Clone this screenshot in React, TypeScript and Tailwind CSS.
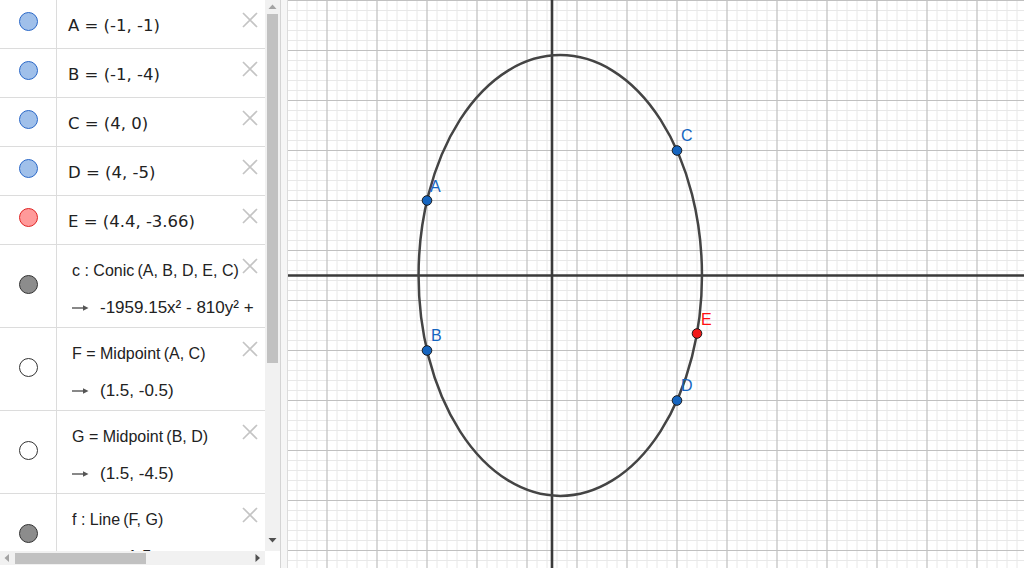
import React from 'react';

type Dot = 'blue' | 'red' | 'gray' | 'white';

const dotClass: Record<Dot, string> = {
  blue: 'bg-[#a0c0ea] border-[#2a68c8]',
  red: 'bg-[#ff9a9a] border-[#e02424]',
  gray: 'bg-[#8c8c8c] border-[#333333]',
  white: 'bg-white border-[#333333]',
};

const simpleRows: { dot: Dot; text: string }[] = [
  { dot: 'blue', text: 'A = (-1, -1)' },
  { dot: 'blue', text: 'B = (-1, -4)' },
  { dot: 'blue', text: 'C = (4, 0)' },
  { dot: 'blue', text: 'D = (4, -5)' },
  { dot: 'red', text: 'E = (4.4, -3.66)' },
];

const tallRows: { dot: Dot; def: string; value: React.ReactNode }[] = [
  { dot: 'gray', def: 'c : Conic\u2009(A, B, D, E, C)', value: <>-1959.15x² - 810y² +</> },
  { dot: 'white', def: 'F = Midpoint\u2009(A, C)', value: '(1.5, -0.5)' },
  { dot: 'white', def: 'G = Midpoint\u2009(B, D)', value: '(1.5, -4.5)' },
  { dot: 'gray', def: 'f : Line\u2009(F, G)', value: 'x = 1.5' },
];

function CloseX() {
  return (
    <svg width="16" height="16" viewBox="0 0 16 16" className="shrink-0">
      <path d="M1 1 L15 15 M15 1 L1 15" stroke="#c4c4c4" strokeWidth="1.7" fill="none" />
    </svg>
  );
}

function Arrow() {
  return (
    <svg width="17" height="8" viewBox="0 0 17 8" className="shrink-0">
      <path d="M0 4 L13 4" stroke="#555555" strokeWidth="1.4" />
      <path d="M11 1.2 L16.5 4 L11 6.8 Z" fill="#555555" />
    </svg>
  );
}

function Circle({ dot }: { dot: Dot }) {
  return <div className={`w-[19px] h-[19px] rounded-full border ${dotClass[dot]}`} />;
}

// graph geometry: page x of x=0 is 477, graph starts at 288
const W = 736;
const H = 568;
const OX = 189;
const OY = 150.5;
const U = 50;

function Graph() {
  const minorV: number[] = [];
  const majorV: number[] = [];
  for (let x = OX % 10; x < W; x += 10) {
    if (Math.abs(((x - OX) / U) % 1) < 0.01) majorV.push(x);
    else minorV.push(x);
  }
  const minorH: number[] = [];
  const majorH: number[] = [];
  for (let y = OY % 10; y < H; y += 10) {
    if (Math.abs(((y - OY) / U) % 1) < 0.01) majorH.push(y);
    else minorH.push(y);
  }
  const px = (x: number) => OX + x * U;
  const py = (y: number) => OY - y * U;

  const points = [
    { n: 'A', x: -1, y: -1, c: '#1565c0', lx: 3, ly: -9 },
    { n: 'B', x: -1, y: -4, c: '#1565c0', lx: 4, ly: -10 },
    { n: 'C', x: 4, y: 0, c: '#1565c0', lx: 4, ly: -10 },
    { n: 'D', x: 4, y: -5, c: '#1565c0', lx: 4, ly: -10 },
    { n: 'E', x: 4.4, y: -3.66, c: '#f21a1a', lx: 4, ly: -9 },
  ];

  return (
    <svg width={W} height={H} className="block shrink-0">
      <rect width={W} height={H} fill="#ffffff" />
      {minorV.map((x) => (
        <line key={'mv' + x} x1={x} y1={0} x2={x} y2={H} stroke="#e8e8e8" strokeWidth="1" />
      ))}
      {minorH.map((y) => (
        <line key={'mh' + y} x1={0} y1={y} x2={W} y2={y} stroke="#e8e8e8" strokeWidth="1" />
      ))}
      {majorV.map((x) => (
        <line key={'jv' + x} x1={x} y1={0} x2={x} y2={H} stroke="#c0c0c0" strokeWidth="1.2" />
      ))}
      {majorH.map((y) => (
        <line key={'jh' + y} x1={0} y1={y} x2={W} y2={y} stroke="#c0c0c0" strokeWidth="1.2" />
      ))}
      {/* line f: x = 1.5 and horizontal line y = -2.5 */}
      <line x1={px(1.5)} y1={0} x2={px(1.5)} y2={H} stroke="#3a3a3a" strokeWidth="2.6" />
      <line x1={0} y1={py(-2.5)} x2={W} y2={py(-2.5)} stroke="#3a3a3a" strokeWidth="2.6" />
      {/* conic c */}
      <ellipse cx={px(1.6654)} cy={py(-2.5)} rx={141.7} ry={220.4} fill="none" stroke="#444444" strokeWidth="2.5" />
      {points.map((p) => (
        <g key={p.n}>
          <circle cx={px(p.x)} cy={py(p.y)} r="4.8" fill={p.c} stroke="#1a1a1a" strokeWidth="1" />
          <text
            x={px(p.x) + p.lx}
            y={py(p.y) + p.ly}
            fill={p.c === '#1565c0' ? '#1565c0' : '#ff1010'}
            fontSize="16"
            fontFamily="'Liberation Sans', Arial, sans-serif"
          >
            {p.n}
          </text>
        </g>
      ))}
    </svg>
  );
}

export default function App() {
  return (
    <div className="flex w-[1024px] h-[568px] overflow-hidden bg-white">
      {/* ALGEBRA VIEW */}
      <div className="w-[280px] shrink-0 flex flex-col">
        <div className="flex h-[551px]">
          <div className="w-[265px] overflow-hidden relative">
            <div className="absolute left-[56px] top-0 bottom-0 w-px bg-[#dcdcdc]" />
            {simpleRows.map((r) => (
              <div key={r.text} className="flex h-[49px] border-b border-[#dcdcdc]">
                <div className="w-[57px] shrink-0 flex justify-center pt-[12px] pr-px">
                  <Circle dot={r.dot} />
                </div>
                <div className="flex-1 pl-[11px] pt-[16px] text-[16.5px] leading-5 text-[#222] whitespace-nowrap font-['DejaVu_Sans',sans-serif]">
                  {r.text}
                </div>
                <div className="pt-[12px] pr-[7px]">
                  <CloseX />
                </div>
              </div>
            ))}
            {tallRows.map((r) => (
              <div key={r.def} className="flex h-[83px] border-b border-[#dcdcdc]">
                <div className="w-[57px] shrink-0 flex justify-center pt-[30px] pr-px">
                  <Circle dot={r.dot} />
                </div>
                <div className="flex-1 min-w-0 pl-[15px] pt-[16px] text-[16px] leading-5 text-[#222] whitespace-nowrap font-['Liberation_Sans',Arial,sans-serif]">
                  <div>{r.def}</div>
                  <div className="mt-[17px] flex items-center gap-[11px]">
                    <Arrow />
                    <span className="text-[17px]">{r.value}</span>
                  </div>
                </div>
                <div className="pt-[13px] pr-[7px] shrink-0">
                  <CloseX />
                </div>
              </div>
            ))}
          </div>
          {/* vertical scrollbar */}
          <div className="w-[15px] bg-[#f1f1f1] flex flex-col items-center">
            <svg width="9" height="14" viewBox="0 0 9 14" className="shrink-0">
              <path d="M0.5 9 L4.5 4.5 L8.5 9 Z" fill="#a3a3a3" />
            </svg>
            <div className="w-[11px] h-[349px] bg-[#c1c1c1]" />
            <div className="flex-1" />
            <svg width="9" height="16" viewBox="0 0 9 16" className="shrink-0 mb-[2px]">
              <path d="M0.5 5 L8.5 5 L4.5 9.5 Z" fill="#505050" />
            </svg>
          </div>
        </div>
        {/* horizontal scrollbar */}
        <div className="flex h-[17px]">
          <div className="w-[265px] h-[14px] bg-[#f1f1f1] flex items-center">
            <svg width="15" height="14" viewBox="0 0 15 14" className="shrink-0">
              <path d="M9 3 L4.5 7 L9 11 Z" fill="#a3a3a3" />
            </svg>
            <div className="w-[131px] h-[11px] bg-[#c1c1c1]" />
            <div className="flex-1" />
            <svg width="15" height="14" viewBox="0 0 15 14" className="shrink-0">
              <path d="M5.5 3 L10 7 L5.5 11 Z" fill="#505050" />
            </svg>
          </div>
          <div className="flex-1 bg-white" />
        </div>
      </div>

      {/* DIVIDER */}
      <div className="w-[8px] shrink-0 flex">
        <div className="w-px bg-[#d4d4d4]" />
        <div className="flex-1 bg-[#f6f6f6]" />
        <div className="w-px bg-[#dcdcdc]" />
      </div>

      {/* GRAPHICS VIEW */}
      <Graph />
    </div>
  );
}
